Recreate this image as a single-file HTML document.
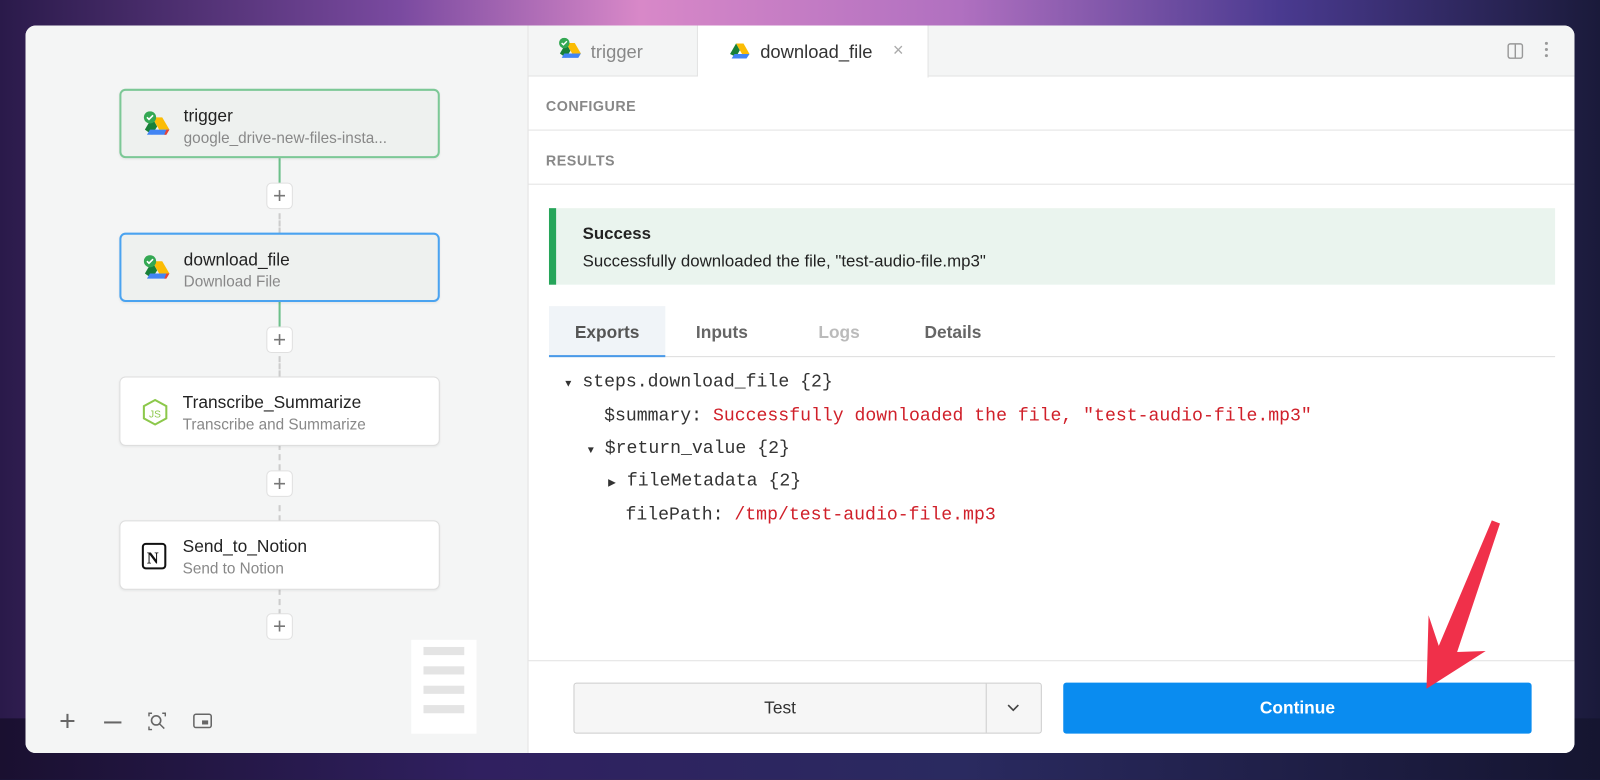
<!DOCTYPE html>
<html><head><style>
*{box-sizing:border-box;margin:0;padding:0}
body{width:1600px;height:779px;overflow:hidden;font-family:"Liberation Sans",sans-serif;background:#1a1a3a;position:relative}
#sc{position:absolute;left:0;top:0;width:1568px;height:764px;transform:scale(1.0204);transform-origin:0 0;
background:linear-gradient(90deg,#2a1a4a 0%,#7a4aa0 25%,#d888c8 40%,#b070c0 60%,#4a3a90 80%,#1a1a3a 100%)}
.bot{position:absolute;left:0;right:0;bottom:0;height:60px;background:linear-gradient(90deg,#1a1030,#302060 30%,#2a2a60 60%,#151530)}
.win{position:absolute;left:25px;top:25px;width:1518px;height:713px;background:#fff;border-radius:10px;overflow:hidden}
.left{position:absolute;left:0;top:0;width:493px;height:713px;background:#f4f5f5;border-right:1px solid #e2e2e2}
.node{position:absolute;left:92px;width:314px;height:68px;background:#fff;border:1px solid #ddd;border-radius:6px;box-shadow:0 1px 2px rgba(0,0,0,.06)}
.node .t{position:absolute;left:61px;top:15px;font-size:17px;color:#222}
.node .s{position:absolute;left:61px;top:38px;font-size:15px;color:#888}
.node .ic{position:absolute;left:20px;top:20px}
.line{position:absolute;left:248px;width:2px}
.plus{position:absolute;left:236px;width:26px;height:26px;background:#fff;border:1px solid #e0e0e0;border-radius:5px;color:#777;font-size:22px;line-height:23px;text-align:center}
.right{position:absolute;left:493px;top:0;right:0;height:713px}
.tabs{height:50px;background:#f4f5f5;border-bottom:1px solid #e2e2e2;position:relative}
.sec{height:53px;border-bottom:1px solid #e2e2e2;font-size:14px;font-weight:bold;color:#888;letter-spacing:.5px;padding:21px 0 0 17px}
.code{font-family:"Liberation Mono",monospace;font-size:17.8px;color:#333;position:absolute}
.red{color:#d0202a}
</style></head><body><div id="sc"><div class="bot"></div>
<div class="win">
<div class="left">
 <div class="line" style="top:130px;height:28px;background:#6cc08a"></div>
 <div class="line" style="top:184px;height:20px;border-left:2px dashed #ccc"></div>
 <div class="line" style="top:270px;height:28px;background:#6cc08a"></div>
 <div class="line" style="top:324px;height:20px;border-left:2px dashed #ccc"></div>
 <div class="line" style="top:410px;height:36px;border-left:2px dashed #ccc"></div>
 <div class="line" style="top:470px;height:16px;border-left:2px dashed #ccc"></div>
 <div class="line" style="top:552px;height:26px;border-left:2px dashed #ccc"></div>
 <div class="node" style="top:62px;border:2px solid #7cc896;background:#eef1ef"><svg class="ic" width="30" height="28" viewBox="0 0 30 28"><path d="M10 6h10l7 12H17z" fill="#fbbc04"/><path d="M3 18l7-12 5 9-5 8z" fill="#188038"/><path d="M5 23l3-5h19l-3 5z" fill="#4285f4"/><path d="M22 23h2l3-5h-3z" fill="#ea4335"/><circle cx="8" cy="6" r="6" fill="#34a853"/><path d="M5 6l2 2 4-4" stroke="#fff" stroke-width="1.6" fill="none"/></svg><div class="t">trigger</div><div class="s">google_drive-new-files-insta...</div></div>
 <div class="node" style="top:203px;border:2px solid #4aa3f0;background:#eef1ef"><svg class="ic" width="30" height="28" viewBox="0 0 30 28"><path d="M10 6h10l7 12H17z" fill="#fbbc04"/><path d="M3 18l7-12 5 9-5 8z" fill="#188038"/><path d="M5 23l3-5h19l-3 5z" fill="#4285f4"/><path d="M22 23h2l3-5h-3z" fill="#ea4335"/><circle cx="8" cy="6" r="6" fill="#34a853"/><path d="M5 6l2 2 4-4" stroke="#fff" stroke-width="1.6" fill="none"/></svg><div class="t">download_file</div><div class="s">Download File</div></div>
 <div class="node" style="top:344px"><svg class="ic" width="28" height="28" viewBox="0 0 28 28"><path d="M14 2l11 6v12l-11 6-11-6V8z" fill="none" stroke="#8cc84b" stroke-width="2"/><text x="8" y="19" font-size="10" fill="#8cc84b" font-family="Liberation Sans">JS</text></svg><div class="t">Transcribe_Summarize</div><div class="s">Transcribe and Summarize</div></div>
 <div class="node" style="top:485px"><svg class="ic" width="28" height="28" viewBox="0 0 28 28"><rect x="2" y="2" width="22" height="24" rx="3" fill="#fff" stroke="#111" stroke-width="2"/><text x="6" y="21" font-size="16" font-weight="bold" fill="#111" font-family="Liberation Serif">N</text></svg><div class="t">Send_to_Notion</div><div class="s">Send to Notion</div></div>
 <div class="plus" style="top:154px">+</div>
 <div class="plus" style="top:295px">+</div>
 <div class="plus" style="top:436px">+</div>
 <div class="plus" style="top:576px">+</div>
 <div style="position:absolute;left:378px;top:602px;width:64px;height:92px;background:#fff">
  <div style="margin:7px 12px;height:8px;background:#e4e4e4"></div><div style="margin:11px 12px;height:8px;background:#e4e4e4"></div><div style="margin:11px 12px;height:8px;background:#e4e4e4"></div><div style="margin:11px 12px;height:8px;background:#e4e4e4"></div></div>
 <div style="position:absolute;left:33px;top:668px;font-size:28px;color:#666;line-height:28px">+</div>
 <div style="position:absolute;left:77px;top:682px;width:17px;height:2px;background:#666"></div>
 <svg style="position:absolute;left:120px;top:673px" width="18" height="18" viewBox="0 0 18 18"><circle cx="8" cy="8" r="4.5" fill="none" stroke="#666" stroke-width="1.6"/><path d="M11 11l5 5M1 4V1h3M14 1h3v3M1 14v3h3" stroke="#666" stroke-width="1.4" fill="none"/></svg>
 <svg style="position:absolute;left:164px;top:674px" width="20" height="16" viewBox="0 0 20 16"><rect x="1" y="1" width="17" height="13" rx="2" fill="none" stroke="#666" stroke-width="1.5"/><rect x="9" y="7" width="6" height="4" fill="#666"/></svg>
</div>
<div class="right">
 <div class="tabs">
  <div style="position:absolute;left:0;top:0;width:166px;height:50px;border-right:1px solid #e2e2e2"><svg style="position:absolute;left:28px;top:12px" width="26" height="24" viewBox="0 0 30 28"><path d="M10 6h10l7 12H17z" fill="#fbbc04"/><path d="M3 18l7-12 5 9-5 8z" fill="#188038"/><path d="M5 23l3-5h19l-3 5z" fill="#4285f4"/><circle cx="8" cy="6" r="6" fill="#34a853"/><path d="M5 6l2 2 4-4" stroke="#fff" stroke-width="1.6" fill="none"/></svg><span style="position:absolute;left:61px;top:16px;font-size:18px;color:#888">trigger</span></div>
  <div style="position:absolute;left:166px;top:0;width:226px;height:51px;background:#fff;border-right:1px solid #e2e2e2"><svg style="position:absolute;left:30px;top:14px" width="22" height="22" viewBox="0 0 30 28"><path d="M10 4h10l8 14H18z" fill="#fbbc04"/><path d="M2 18l8-14 5 9-5 9z" fill="#188038"/><path d="M4 24l4-6h20l-4 6z" fill="#4285f4"/></svg><span style="position:absolute;left:61px;top:16px;font-size:18px;color:#333">download_file</span><span style="position:absolute;left:191px;top:14px;font-size:18px;color:#aaa">×</span></div>
  <svg style="position:absolute;right:50px;top:17px" width="16" height="16"><rect x="1" y="1" width="14" height="14" rx="2" fill="none" stroke="#999" stroke-width="1.4"/><path d="M8 1v14" stroke="#999" stroke-width="1.4"/></svg>
  <div style="position:absolute;right:26px;top:16px;width:3px;font-size:0"><div style="width:3px;height:3px;background:#999;border-radius:2px;margin-bottom:3px"></div><div style="width:3px;height:3px;background:#999;border-radius:2px;margin-bottom:3px"></div><div style="width:3px;height:3px;background:#999;border-radius:2px"></div></div>
 </div>
 <div class="sec">CONFIGURE</div>
 <div class="sec">RESULTS</div>
 <div style="position:absolute;left:20px;top:179px;width:986px;height:75px;background:#eaf4ee;border-left:7px solid #26a55a">
  <div style="position:absolute;left:26px;top:16px;font-size:16.5px;font-weight:bold;color:#222">Success</div>
  <div style="position:absolute;left:26px;top:43px;font-size:16.5px;color:#222">Successfully downloaded the file, "test-audio-file.mp3"</div></div>
 <div style="position:absolute;left:20px;top:275px;width:986px;height:50px;border-bottom:1px solid #ddd;font-size:17px;font-weight:bold">
  <div style="position:absolute;left:0;top:0;width:114px;height:50px;background:#f0f4f8;border-bottom:2px solid #4a9ae8;color:#555;text-align:center;padding-top:16px">Exports</div>
  <div style="position:absolute;left:144px;top:16px;color:#666">Inputs</div>
  <div style="position:absolute;left:264px;top:16px;color:#bbb">Logs</div>
  <div style="position:absolute;left:368px;top:16px;color:#666">Details</div></div>
 <div class="code" style="left:36px;top:340px"><span style="font-size:10px">▼</span> steps.download_file {2}</div>
 <div class="code" style="left:74px;top:373px">$summary: <span class="red">Successfully downloaded the file, "test-audio-file.mp3"</span></div>
 <div class="code" style="left:58px;top:405px"><span style="font-size:10px">▼</span> $return_value {2}</div>
 <div class="code" style="left:78px;top:437px"><span style="font-size:10px">▶</span> fileMetadata {2}</div>
 <div class="code" style="left:95px;top:470px">filePath: <span class="red">/tmp/test-audio-file.mp3</span></div>
 <div style="position:absolute;left:0;right:0;top:622px;height:91px;border-top:1px solid #e2e2e2;background:#fff"></div>
 <div style="position:absolute;left:44px;top:644px;width:459px;height:50px;border:1px solid #ccc;border-radius:3px;background:#f6f6f6">
  <div style="position:absolute;left:0;top:0;width:404px;height:48px;border-right:1px solid #ccc;text-align:center;line-height:48px;font-size:17px;color:#333">Test</div>
  <svg style="position:absolute;left:424px;top:20px" width="12" height="8"><path d="M1 1l5 5 5-5" stroke="#444" stroke-width="1.6" fill="none"/></svg></div>
 <div style="position:absolute;left:524px;top:644px;width:459px;height:50px;background:#0a8cf0;border-radius:3px;color:#fff;text-align:center;line-height:50px;font-size:17px;font-weight:bold">Continue</div>
 <svg style="position:absolute;left:840px;top:480px" width="130" height="200" viewBox="0 0 130 200"><path d="M104 5 L52 128 L42 98 L40 170 L98 133 L70 134 L112 8 Z" fill="#f0304a"/></svg>
</div>
</div>
</div></body></html>
